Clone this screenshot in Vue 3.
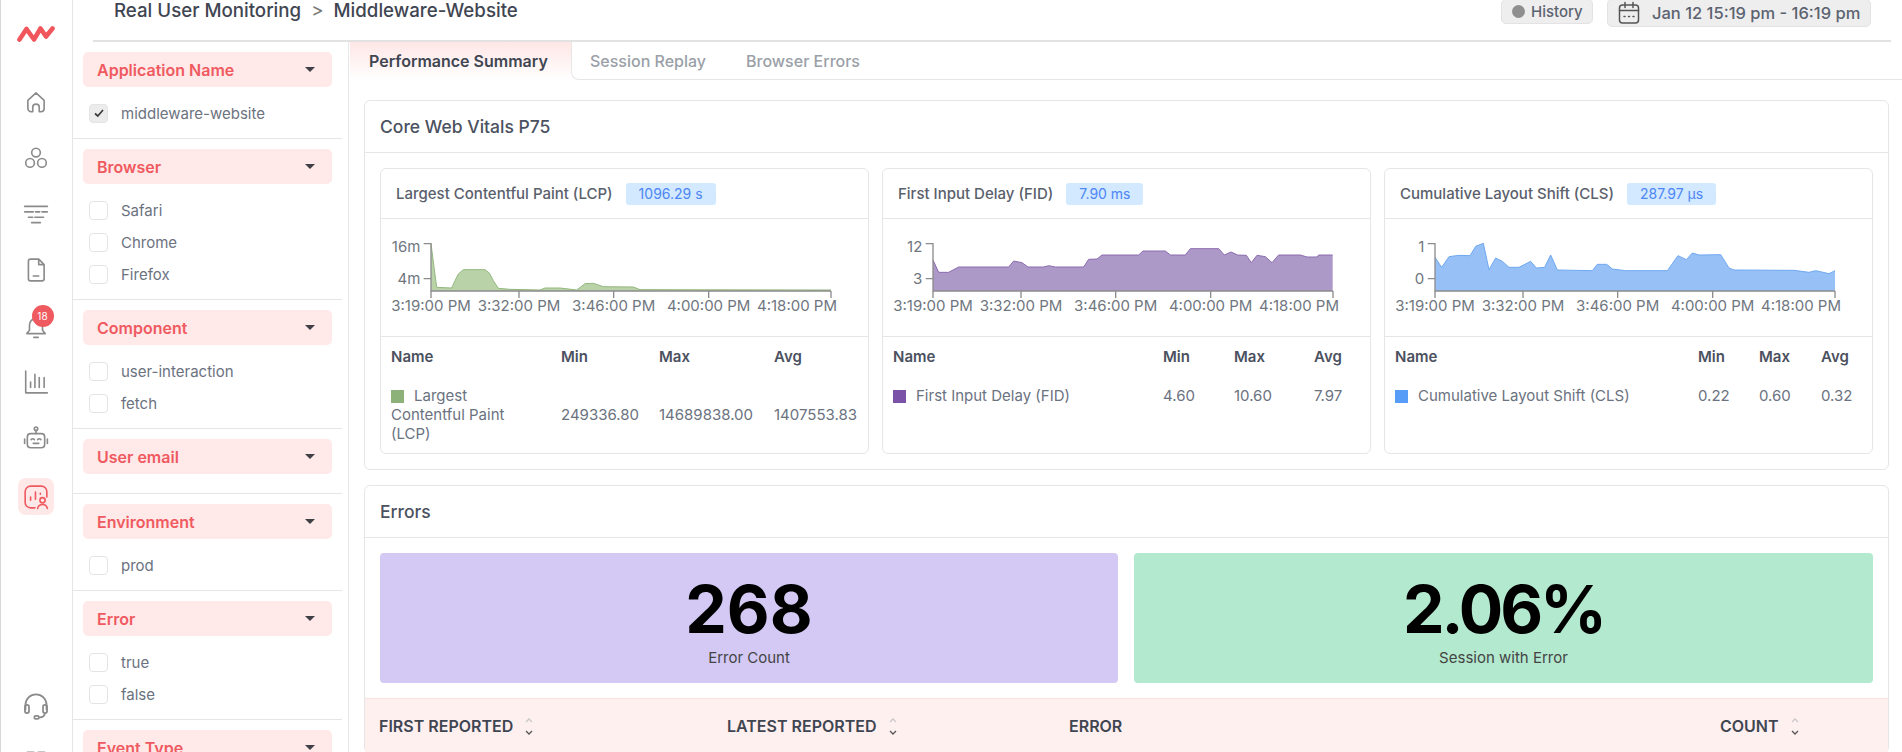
<script setup>
const filters = [
  { name: 'Application Name', items: [{ label: 'middleware-website', checked: true }] },
  { name: 'Browser', items: [{ label: 'Safari' }, { label: 'Chrome' }, { label: 'Firefox' }] },
  { name: 'Component', items: [{ label: 'user-interaction' }, { label: 'fetch' }] },
  { name: 'User email', items: [] },
  { name: 'Environment', items: [{ label: 'prod' }] },
  { name: 'Error', items: [{ label: 'true' }, { label: 'false' }] },
  { name: 'Event Type', items: [] },
]

const lcp = '183,254 200,385 245,387 255,365 265,345 280,332 345,332 358,342 370,365 385,388 420,391 510,393 525,387 570,387 620,393 632,384 645,374 670,373 700,383 790,384 810,392 1383,393'
const fid = '158,303 175,340 205,340 235,324 385,324 400,306 425,311 443,324 490,324 505,320 525,324 610,324 625,301 650,300 665,288 775,288 788,276 855,276 870,288 915,288 930,269 1015,269 1032,288 1052,279 1072,288 1098,289 1113,311 1130,289 1155,293 1175,311 1195,288 1260,288 1280,294 1310,294 1315,288 1357,288'
const cls = '163,295 183,325 205,293 235,289 268,290 285,262 308,253 325,332 345,297 365,307 385,325 415,325 450,307 467,327 492,325 510,288 530,333 635,335 650,316 678,316 695,330 735,335 860,335 892,290 917,302 935,282 955,288 1020,287 1045,327 1060,333 1240,334 1285,340 1305,335 1345,344 1363,335'

const cards = [
  { title: 'Largest Contentful Paint (LCP)', value: '1096.29 s', left: 33, x0: 183, ys: ['16m', '4m'], pts: lcp, fill: '#b9d2a8', stroke: '#93b87e', swatch: 'sw-green', cls: 'tbl-a', min: '249336.80', max: '14689838.00', avg: '1407553.83' },
  { title: 'First Input Delay (FID)', value: '7.90 ms', left: 8, x0: 158, ys: ['12', '3'], pts: fid, fill: '#ad99c7', stroke: '#8b6cb0', swatch: 'sw-purple', cls: 'tbl-b', min: '4.60', max: '10.60', avg: '7.97' },
  { title: 'Cumulative Layout Shift (CLS)', value: '287.97 µs', left: 13, x0: 163, ys: ['1', '0'], pts: cls, fill: '#96c0f6', stroke: '#6fa8f0', swatch: 'sw-blue', cls: 'tbl-c', min: '0.22', max: '0.60', avg: '0.32' },
]

const tickLabels = [
  { t: '3:19:00 PM', dx: 0, tick: 0 },
  { t: '3:32:00 PM', dx: 264, tick: 264 },
  { t: '3:46:00 PM', dx: 548, tick: 548 },
  { t: '4:00:00 PM', dx: 833, tick: 833 },
  { t: '4:18:00 PM', dx: 1098, tick: 1200 },
]

function area(c) {
  const end = c.pts.trim().split(' ').pop().split(',')[0]
  return `M${c.x0},396 L${c.pts.replace(/ /g, ' L')} L${end},396 Z`
}
function line(c) {
  return `M${c.pts.replace(/ /g, ' L')}`
}
const columns = [
  { label: 'FIRST REPORTED', sort: true },
  { label: 'LATEST REPORTED', sort: true },
  { label: 'ERROR', sort: false },
  { label: 'COUNT', sort: true },
]
</script>

<template>
  <div class="app">
    <aside class="rail">
      <div class="rail-inner">
        <svg class="logo" viewBox="0 0 38 20" width="38" height="20"><path d="M2.5 15.5 L9.5 5 L17 15.5 L23.5 4.5 L29 12.5 L35.5 4.5" fill="none" stroke="#f0565c" stroke-width="4.6" stroke-linecap="round" stroke-linejoin="round" /></svg>
        <div class="nav">
          <svg viewBox="0 0 24 24" width="26" height="26"><path d="M4.5 10.5 L12 3.5 L19.5 10.5 V18 a3 3 0 0 1-3 3 h-1.5 v-4 a3 3 0 0 0-6 0 v4 H7.5 a3 3 0 0 1-3-3z" /></svg>
        </div>
        <div class="nav">
          <svg viewBox="0 0 24 24" width="26" height="26"><circle cx="12" cy="7" r="4" /><circle cx="6.5" cy="16.5" r="4" /><circle cx="17.5" cy="16.5" r="4" /></svg>
        </div>
        <div class="nav">
          <svg viewBox="0 0 24 24" width="26" height="26"><path d="M1.5 5h21 M1.5 10h8 M11.5 10h4 M17.5 10h5 M5 15h4 M11 15h8 M8 20h8" /></svg>
        </div>
        <div class="nav">
          <svg viewBox="0 0 24 24" width="26" height="26"><path d="M7 2h7.5l5 5v13a2 2 0 0 1-2 2H7a2 2 0 0 1-2-2V4a2 2 0 0 1 2-2z M14.5 2v5h5 M9.5 17.5h5" /></svg>
        </div>
        <div class="nav bell">
          <svg viewBox="0 0 24 24" width="26" height="26"><path d="M6 16 V11 a6 6 0 0 1 12 0 v5 l2.5 3 H3.5z M10 22.5 h4" /></svg>
          <span class="badge">18</span>
        </div>
        <div class="nav">
          <svg viewBox="0 0 24 24" width="26" height="26"><path d="M2.5 2v20h20 M7 17v-5 M11 17V5 M15 17V8 M19.5 17v-9" /></svg>
        </div>
        <div class="nav">
          <svg viewBox="0 0 24 24" width="26" height="26"><rect x="4" y="8" width="16" height="13" rx="3" /><circle cx="12" cy="3.5" r="1.6" /><path d="M12 5v3 M1.5 13v4 M22.5 13v4 M7.5 13.5q1.5-1.6 3 0 M13.5 13.5q1.5-1.6 3 0 M9.5 17h5" /></svg>
        </div>
        <div class="nav active">
          <svg viewBox="0 0 24 24" width="26" height="26"><path d="M11 22H7a5 5 0 0 1-5-5V7a5 5 0 0 1 5-5h10a5 5 0 0 1 5 5v5 M7 15v-3 M11.5 14V7.5 M16 8.5v1" /><circle cx="18" cy="15" r="2.4" /><path d="M13.5 22.5q1-3.6 4.5-3.6t4.5 3.6" /></svg>
        </div>
        <div class="nav headset">
          <svg viewBox="0 0 24 24" width="28" height="28"><path d="M3 15V11a9 9 0 0 1 18 0v4 M19.5 18.5q0 3-5 3.5" /><rect x="2.5" y="11" width="3.5" height="7" rx="1.7" /><rect x="18" y="11" width="3.5" height="7" rx="1.7" /><rect x="10.5" y="20.5" width="4" height="2.6" rx="1.3" /></svg>
        </div>
        <div class="nav">
          <svg viewBox="0 0 24 24" width="26" height="26"><rect x="3" y="3" width="8" height="8" rx="1.5" /><rect x="13" y="3" width="8" height="8" rx="1.5" /><rect x="3" y="13" width="8" height="8" rx="1.5" /><rect x="13" y="13" width="8" height="8" rx="1.5" /></svg>
        </div>
      </div>
    </aside>

    <div class="right">
      <header class="top">
        <div class="crumbs">
          <span>Real User Monitoring</span>
          <span class="sep">&gt;</span>
          <span>Middleware-Website</span>
        </div>
        <div class="top-actions">
          <button class="history"><i class="dot"></i>History</button>
          <button class="range">
            <svg viewBox="0 0 24 24" width="24" height="24"><rect x="2.5" y="4" width="19" height="18" rx="3" /><path d="M2.5 9.5h19 M8 1.5v5 M16 1.5v5 M7 15.5h1 M11.5 15.5h1 M16 15.5h1" /></svg>
            <span>Jan 12 15:19 pm - 16:19 pm</span>
          </button>
        </div>
      </header>

      <div class="body">
        <section class="filters">
          <div v-for="f in filters" :key="f.name" class="filter">
            <div class="filter-head">
              <span>{{ f.name }}</span>
              <i class="caret"></i>
            </div>
            <div v-if="f.items.length" class="filter-items">
              <label v-for="it in f.items" :key="it.label" class="filter-item">
                <span class="check" :class="{ on: it.checked }">
                  <svg v-if="it.checked" viewBox="0 0 12 12" width="12" height="12"><path d="M2 6.5 L4.8 9 L10 3" fill="none" stroke="#3b3b3b" stroke-width="1.7" /></svg>
                </span>
                <span>{{ it.label }}</span>
              </label>
            </div>
          </div>
        </section>

        <main class="main">
          <div class="tabs">
            <div class="tab current">Performance Summary</div>
            <div class="tab-rest">
              <span class="tab">Session Replay</span>
              <span class="tab">Browser Errors</span>
            </div>
          </div>

          <div class="content">
            <section class="panel">
              <h2 class="panel-title">Core Web Vitals P75</h2>
              <div class="vitals">
                <article v-for="c in cards" :key="c.title" class="vital">
                  <div class="vital-head">
                    <span>{{ c.title }}</span>
                    <span class="pill">{{ c.value }}</span>
                  </div>
                  <div class="vital-chart">
                    <svg viewBox="0 0 1461 351" width="487" height="117">
                      <g :transform="`translate(${-c.left},-180)`">
                        <path :d="area(c)" :fill="c.fill" />
                        <path :d="line(c)" fill="none" :stroke="c.stroke" stroke-width="3" stroke-linejoin="round" />
                        <path :d="`M${c.x0 - 22},254 H${c.x0} V396 H${c.x0 + 1200} M${c.x0 - 22},359 H${c.x0}`" fill="none" stroke="#8c8c8c" stroke-width="4" />
                        <path v-for="l in tickLabels" :key="l.t" :d="`M${c.x0 + l.tick},396 v21`" stroke="#8c8c8c" stroke-width="4" />
                        <text v-for="(y, i) in c.ys" :key="y" class="ax" :x="c.x0 - 32" :y="i ? 375 : 280" text-anchor="end">{{ y }}</text>
                        <text v-for="l in tickLabels" :key="'t' + l.t" class="ax" :x="c.x0 + l.dx" y="457" text-anchor="middle">{{ l.t }}</text>
                      </g>
                    </svg>
                  </div>
                  <div class="vital-table" :class="c.cls">
                    <b>Name</b><b>Min</b><b>Max</b><b>Avg</b>
                    <div class="cell name"><i class="swatch" :class="c.swatch"></i>{{ c.title }}</div>
                    <div class="cell">{{ c.min }}</div>
                    <div class="cell">{{ c.max }}</div>
                    <div class="cell">{{ c.avg }}</div>
                  </div>
                </article>
              </div>
            </section>

            <section class="panel errors">
              <h2 class="panel-title">Errors</h2>
              <div class="stats">
                <div class="stat purple">
                  <strong>268</strong>
                  <span>Error Count</span>
                </div>
                <div class="stat green">
                  <strong class="tight">2.06%</strong>
                  <span>Session with Error</span>
                </div>
              </div>
              <div class="thead">
                <div v-for="col in columns" :key="col.label" class="th">
                  <span>{{ col.label }}</span>
                  <svg v-if="col.sort" viewBox="0 0 10 20" width="10" height="20"><path d="M2 6 L5 3 L8 6" fill="none" stroke="#c9c9c9" stroke-width="1.3" /><path d="M2 15 L5 18 L8 15" fill="none" stroke="#555" stroke-width="1.3" /></svg>
                </div>
              </div>
            </section>
          </div>
        </main>
      </div>
    </div>
  </div>
</template>

<style>
html, body { margin: 0; overflow: hidden; background: #fff; }
</style>

<style scoped>
.app {
  display: flex;
  width: 1902px;
  height: 752px;
  overflow: hidden;
  background: #fff;
  font-family: Inter, "Liberation Sans", sans-serif;
  font-size: 15px;
  color: #6b7280;
}
.rail {
  width: 73px;
  height: 752px;
  flex: none;
  box-sizing: border-box;
  border-left: 1px solid #d8d8d8;
  border-right: 1px solid #e6e6e6;
  overflow: hidden;
}
.rail-inner {
  display: flex;
  flex-direction: column;
  align-items: center;
  height: 780px;
  box-sizing: border-box;
  padding: 24px 2px 0 0;
  gap: 20px;
}
.logo { height: 20px; margin-bottom: 20px; }
.nav {
  position: relative;
  width: 36px;
  height: 36px;
  display: flex;
  align-items: center;
  justify-content: center;
  border-radius: 8px;
}
.nav svg { fill: none; stroke: #8b8b8b; stroke-width: 1.5; stroke-linecap: round; stroke-linejoin: round; }
.nav.active { background: #ffe8e8; margin-top: 2px; height: 37px; }
.nav.active svg { stroke: #ee5a5f; }
.nav.headset { margin-top: auto; }
.badge {
  position: absolute;
  left: 14px;
  top: -3px;
  width: 22px;
  height: 22px;
  border-radius: 50%;
  background: #ee5a5f;
  color: #fff;
  font-size: 10px;
  line-height: 22px;
  text-align: center;
}
.right { flex: 1; min-width: 0; display: flex; flex-direction: column; }
.top {
  height: 40px;
  flex: none;
  margin: 0 11px 0 20px;
  padding: 0 20px 0 21px;
  display: flex;
  justify-content: space-between;
  align-items: flex-start;
  border-bottom: 2px solid #e2e2e2;
}
.crumbs {
  display: flex;
  gap: 10px;
  font-size: 18.7px;
  font-weight: 500;
  line-height: 21px;
  color: #3f4652;
}
.crumbs .sep { color: #777; font-weight: 400; }
.top-actions { display: flex; gap: 14px; align-items: flex-start; margin-top: -1px; }
button {
  font: inherit;
  color: #5c6370;
  background: #eeeeee;
  border: 1px solid #e3e3e3;
  border-radius: 5px;
  display: flex;
  align-items: center;
  padding: 0;
}
.history { width: 92px; height: 25px; padding-left: 10px; gap: 6px; font-weight: 500; box-sizing: border-box; }
.dot { width: 13px; height: 13px; border-radius: 50%; background: #8f8f8f; }
.range { width: 264px; height: 28px; box-sizing: border-box; padding-left: 9px; gap: 11px; font-size: 16.5px; font-weight: 500; }
.range svg { fill: none; stroke: #555; stroke-width: 1.5; stroke-linecap: round; }
.body { flex: 1; display: flex; min-height: 0; }
.filters { width: 276px; flex: none; box-sizing: border-box; border-right: 1px solid #e8e8e8; overflow: hidden; }
.filter { width: 269px; padding: 10px 0 9px; border-bottom: 1px solid #e6e6e6; }
.filter-head {
  margin-left: 10px;
  width: 249px;
  height: 35px;
  box-sizing: border-box;
  padding: 0 17px 0 14px;
  background: #ffe9e9;
  border-radius: 5px;
  display: flex;
  align-items: center;
  justify-content: space-between;
  color: #ef5a60;
  font-size: 16px;
  font-weight: 600;
}
.caret { width: 0; height: 0; border-left: 5px solid transparent; border-right: 5px solid transparent; border-top: 5px solid #3f3f46; }
.filter-items { margin-top: 10px; }
.filter > .filter-head:last-child { margin-bottom: 10px; }
.filter-item { display: flex; align-items: center; height: 32px; padding-left: 16px; gap: 13px; color: #6b7280; }
.check {
  width: 19px;
  height: 19px;
  box-sizing: border-box;
  border: 1px solid #e4e4e4;
  border-radius: 4px;
  display: flex;
  align-items: center;
  justify-content: center;
}
.check.on { background: #ececec; }
.main { flex: 1; min-width: 0; display: flex; flex-direction: column; }
.tabs { display: flex; height: 38px; flex: none; }
.tab { font-size: 16px; font-weight: 500; color: #9aa0a8; }
.tab.current {
  width: 221px;
  margin-left: 1px;
  box-sizing: border-box;
  padding-left: 19px;
  line-height: 38px;
  font-weight: 600;
  color: #3f4652;
  background: linear-gradient(#ffe6e6, #ffffff);
}
.tab-rest {
  flex: 1;
  display: flex;
  align-items: center;
  gap: 40px;
  padding-left: 18px;
  border-left: 1px solid #e6e6e6;
  border-bottom: 1px solid #e6e6e6;
  border-bottom-left-radius: 8px;
}
.content { padding: 20px 13px 0 15px; display: flex; flex-direction: column; gap: 15px; }
.panel { border: 1px solid #e6e6e6; border-radius: 6px; background: #fff; }
.panel-title {
  margin: 0;
  height: 51px;
  line-height: 51px;
  padding-left: 15px;
  font-size: 17.5px;
  font-weight: 500;
  color: #4b5160;
  border-bottom: 1px solid #e6e6e6;
}
.vitals { display: grid; grid-template-columns: repeat(3, 489px); gap: 13px; padding: 15px; }
.vital { height: 286px; box-sizing: border-box; border: 1px solid #e6e6e6; border-radius: 6px; }
.vital-head {
  height: 50px;
  box-sizing: border-box;
  padding-left: 15px;
  display: flex;
  align-items: center;
  gap: 13px;
  font-weight: 500;
  color: #5a606c;
  border-bottom: 1px solid #e6e6e6;
}
.pill {
  height: 22px;
  padding: 0 13px;
  line-height: 22px;
  border-radius: 3px;
  background: #d2e9ff;
  color: #4e86f5;
  font-size: 14px;
  font-weight: 400;
}
.vital-chart { height: 117px; border-bottom: 1px solid #e6e6e6; }
.vital-chart svg { display: block; }
.ax { font-size: 45px; fill: #6f7680; font-family: Inter, "Liberation Sans", sans-serif; }
.vital-table { display: grid; padding-left: 10px; align-items: center; line-height: 19px; }
.vital-table b { height: 40px; line-height: 40px; font-weight: 600; color: #4b5160; }
.tbl-a { grid-template-columns: 170px 98px 115px 1fr; }
.tbl-b { grid-template-columns: 270px 71px 80px 1fr; }
.tbl-c { grid-template-columns: 303px 61px 62px 1fr; }
.cell { padding-top: 9px; }
.tbl-a .name { padding-right: 20px; }
.swatch { display: inline-block; width: 13px; height: 13px; margin-right: 10px; vertical-align: -2px; }
.sw-green { background: #8cb27a; }
.sw-purple { background: #7a52a8; }
.sw-blue { background: #579cf7; }
.stats { display: grid; grid-template-columns: 738px 739px; gap: 16px; padding: 15px; }
.stat {
  height: 130px;
  box-sizing: border-box;
  padding-top: 16px;
  border-radius: 4px;
  display: flex;
  flex-direction: column;
  align-items: center;
  color: #444;
}
.stat strong { font-size: 66px; font-weight: 700; line-height: 80px; color: #000; }
.stat strong.tight { letter-spacing: -3px; }
.stat span { line-height: 18px; }
.purple { background: #d3c9f4; }
.green { background: #b3e9cf; }
.thead {
  display: grid;
  grid-template-columns: 348px 342px 651px 1fr;
  height: 54px;
  box-sizing: border-box;
  padding-left: 14px;
  background: #fff0f0;
  border-top: 1px solid #fde3e0;
}
.th { display: flex; align-items: center; gap: 11px; font-size: 16px; font-weight: 600; color: #3f4652; }
</style>
